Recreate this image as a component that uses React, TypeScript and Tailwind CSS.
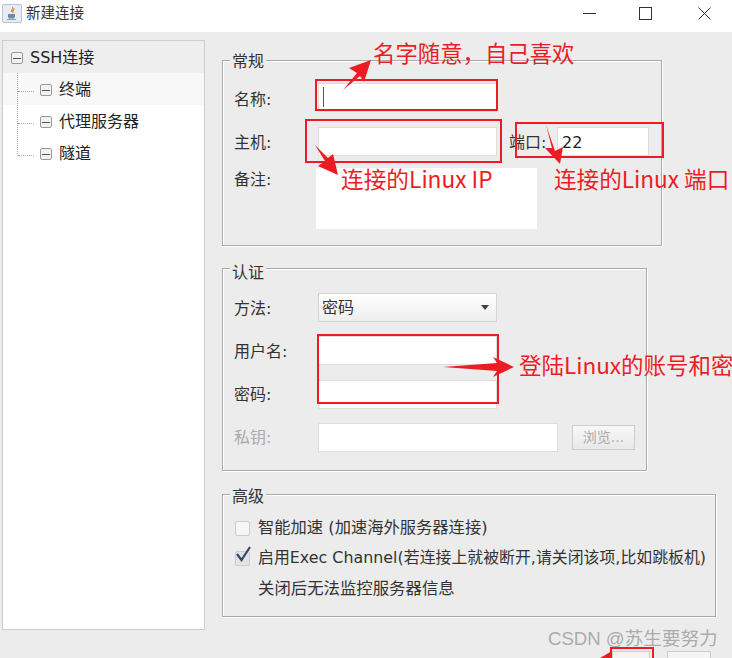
const cjk = "font-['DejaVu_Sans','Noto_Sans_CJK_SC',sans-serif]"
const note = "pointer-events-none absolute whitespace-nowrap font-['Noto_Sans_CJK_SC',sans-serif] leading-8 text-[#ed1c24]"

function TreeRow({ label, active }: { label: string; active?: boolean }) {
  return (
    <div className={`flex h-8 items-center pl-[37px] pt-[2px] text-[16px] text-[#222] ${active ? "bg-[#f8f8f8]" : ""}`}>
      <Expander />
      <span className="ml-[7px]">{label}</span>
    </div>
  )
}

function Expander() {
  return (
    <span className="flex h-[12px] w-[12px] shrink-0 items-center justify-center rounded-[2px] border border-[#999] bg-[#f2f2f2]">
      <span className="h-px w-[8px] bg-[#555]" />
    </span>
  )
}

function Group({ title, className, legend, children }: { title: string; className: string; legend: string; children: React.ReactNode }) {
  return (
    <div className={`relative border border-[#aaa] shadow-[1px_1px_0_#fff,inset_1px_1px_0_#fff] ${className}`}>
      <span className={`absolute left-[7px] bg-[#ececec] px-[2px] text-[16px] leading-5 text-[#333] ${legend}`}>{title}</span>
      {children}
    </div>
  )
}

function Field({ className = "w-[179px]", children }: { className?: string; children?: React.ReactNode }) {
  return (
    <div className={`flex h-[29px] items-center border border-[#ddd] bg-white pl-1 ${className}`}>{children}</div>
  )
}

function Label({ children, muted, className = "pt-[2px]" }: { children: string; muted?: boolean; className?: string }) {
  return <span className={`w-[84px] shrink-0 text-[16px] ${className} ${muted ? "text-[#aaa]" : "text-[#333]"}`}>{children}</span>
}

export default function App() {
  return (
    <div className={`relative h-[658px] w-[732px] overflow-hidden bg-[#ececec] ${cjk}`}>
      {/* title bar */}
      <div className="flex h-8 items-center bg-white pb-[5px] pl-[2px]">
        <span className="flex h-[19px] w-[20px] items-center justify-center rounded-[2px] border border-[#b8c4d2] bg-[#e6edf5]">
          <svg width="14" height="15" viewBox="0 0 14 15">
            <path d="M7.5 1c1 2-2 3-1 5 0-1.500 2-2 2.500-3.500 0 2-2 3-1 4.500" stroke="#d9762b" strokeWidth="1" fill="none" />
            <path d="M3 8h7v2.500c0 1.500-1 2-2 2H5c-1 0-2-.5-2-2z" fill="#6d8ba8" />
            <path d="M2 13.500h9" stroke="#8aa0b5" strokeWidth="1" />
          </svg>
        </span>
        <span className="ml-[4px] text-[14.5px] text-[#333]">新建连接</span>
        <div className="ml-auto flex items-center">
          <span className="mr-[43px] h-px w-[13px] bg-[#333]" />
          <span className="mr-[46px] h-[13px] w-[13px] border border-[#333]" />
          <svg className="mr-[21px]" width="13" height="13" viewBox="0 0 13 13" stroke="#333" strokeWidth="1">
            <path d="M.5.5l12 12M12.500.5l-12 12" />
          </svg>
        </div>
      </div>

      <div className="flex pt-2">
        {/* connection tree */}
        <div className="ml-[2px] h-[590px] w-[203px] shrink-0 border border-[#ccc] bg-white">
          <div className="flex h-8 items-center bg-[#eeeeee] pl-[8px] pt-[2px] text-[16px] text-[#222]">
            <Expander />
            <span className="ml-[7px]">SSH连接</span>
          </div>
          <div className="relative">
            <div className="absolute left-[14px] top-0 h-[83px] border-l border-dotted border-[#aaa]" />
            <div className="absolute left-[15px] top-[18px] w-[16px] border-t border-dotted border-[#aaa]" />
            <div className="absolute left-[15px] top-[50px] w-[16px] border-t border-dotted border-[#aaa]" />
            <div className="absolute left-[15px] top-[82px] w-[16px] border-t border-dotted border-[#aaa]" />
            <TreeRow label="终端" active />
            <TreeRow label="代理服务器" />
            <TreeRow label="隧道" />
          </div>
        </div>

        {/* settings */}
        <div className="ml-[17px] flex flex-col pt-5">
          <Group title="常规" legend="-top-[9px]" className="h-[186px] w-[440px] pl-[11px] pt-[21px]">
            <div className="flex items-center">
              <Label className="pt-[6px]">名称:</Label>
              <Field>
                <span className="h-5 w-px bg-[#555]" />
              </Field>
            </div>
            <div className="mt-[15px] flex items-center">
              <Label>主机:</Label>
              <Field />
              <span className="ml-[12px] w-[48px] pt-[2px] text-[16px] text-[#333]">端口:</span>
              <Field className="w-[92px]">
                <span className="pt-[2px] text-[16px] text-[#222]">22</span>
              </Field>
            </div>
            <div className="mt-[12px] flex items-start">
              <span className="w-[82px] shrink-0 text-[16px] text-[#333]">备注:</span>
              <div className="h-[61px] w-[221px] bg-white" />
            </div>
          </Group>

          <Group title="认证" legend="-top-[6px]" className="mt-[22px] h-[203px] w-[425px] pl-[11px] pt-[24px]">
            <div className="flex items-center">
              <Label>方法:</Label>
              <div className="flex h-[29px] w-[179px] items-center justify-between border border-[#d4d4d4] bg-gradient-to-b from-white to-[#eeeeee] pl-[3px] pr-[7px] text-[16px] text-[#333]">
                密码
                <span className="h-0 w-0 border-x-4 border-t-[5px] border-x-transparent border-t-[#444]" />
              </div>
            </div>
            <div className="mt-[14px] flex items-center">
              <Label>用户名:</Label>
              <Field />
            </div>
            <div className="mt-[15px] flex items-center">
              <Label className="pt-0">密码:</Label>
              <Field />
            </div>
            <div className="mt-[14px] flex items-center">
              <Label muted className="pt-0">私钥:</Label>
              <Field className="w-[240px]" />
              <button className="ml-[14px] h-[25px] w-[63px] border border-[#ccc] bg-gradient-to-b from-[#f8f8f8] to-[#e8e8e8] text-[14px] text-[#aaa]">
                浏览...
              </button>
            </div>
          </Group>

          <Group title="高级" legend="-top-[8px]" className="mt-[23px] h-[123px] w-[494px] pl-[12px] pt-[21px]">
            <div className="flex h-[24px] items-center">
              <span className="h-[15px] w-[15px] rounded-[2px] border border-[#ccc] bg-[#f6f6f6]" />
              <span className="ml-2 text-[16.3px] text-[#333]">智能加速 (加速海外服务器连接)</span>
            </div>
            <div className="relative mt-[6px] flex h-[24px] items-center">
              <span className="h-[15px] w-[15px] rounded-[2px] border border-[#ccc] bg-[#e4e4e4]" />
              <svg className="absolute -top-[1px] left-0" width="17" height="18" viewBox="0 0 17 18">
                <path d="M2 9l4.500 6L15 2" stroke="#2f4a6b" strokeWidth="2.200" fill="none" />
              </svg>
              <span className="ml-2 whitespace-nowrap text-[15.9px] text-[#333]">
                启用Exec Channel(若连接上就被断开,请关闭该项,比如跳板机)
              </span>
            </div>
            <div className="mt-[7px] flex h-[24px] items-center pl-[23px] text-[16.4px] text-[#333]">关闭后无法监控服务器信息</div>
          </Group>

          {/* dialog buttons, cut off by the screenshot */}
          <div className="ml-[390px] mt-[34px] flex gap-[17px]">
            <button className="h-[29px] w-[38px] border border-[#ccc] bg-[#f4f4f4] text-[14px] text-[#333]">确定</button>
            <button className="h-[29px] w-[44px] border border-[#ccc] bg-[#f4f4f4] text-[14px] text-[#333]">取消</button>
          </div>
        </div>
      </div>

      {/* red annotations drawn over the dialog */}
      <svg className="absolute inset-0" width="732" height="658" viewBox="0 0 732 658">
        <g fill="none" stroke="#ed1c24" strokeWidth="2">
          <rect x="316" y="80" width="181" height="30" />
          <rect x="306" y="120" width="195" height="42" />
          <rect x="516" y="123" width="147" height="34" />
          <rect x="318" y="335" width="180" height="68" />
          <rect x="611" y="648" width="42" height="14" />
        </g>
        <g fill="#ed1c24">
          <polygon points="343,90 357,73 349,68 371,60 364,82 360,76" />
          <polygon points="315,145 328,158 333,154 338,175 318,166 325,161" />
          <polygon points="546,125 555,151 563,147 560,164 545,148 552,148" />
          <polygon points="443,367 497,363 493,357 514,367 493,377 497,371" />
          <polygon points="600,658 612,651 612,658" />
        </g>
      </svg>
      <div className={`${note} left-[373px] top-[36px] text-[22.4px]`}>名字随意，自己喜欢</div>
      <div className={`${note} left-[341px] top-[163px] text-[22.7px]`}>连接的Linux IP</div>
      <div className={`${note} left-[554px] top-[163px] text-[22.6px]`}>连接的Linux 端口</div>
      <div className={`${note} left-[519px] top-[348px] text-[22.5px]`}>登陆Linux的账号和密</div>
      <div className="pointer-events-none absolute left-[548px] top-[627px] whitespace-nowrap font-['Liberation_Sans','Noto_Sans_CJK_SC',sans-serif] text-[18.6px] leading-6 text-[#999]/80">CSDN @苏生要努力</div>
    </div>
  )
}
